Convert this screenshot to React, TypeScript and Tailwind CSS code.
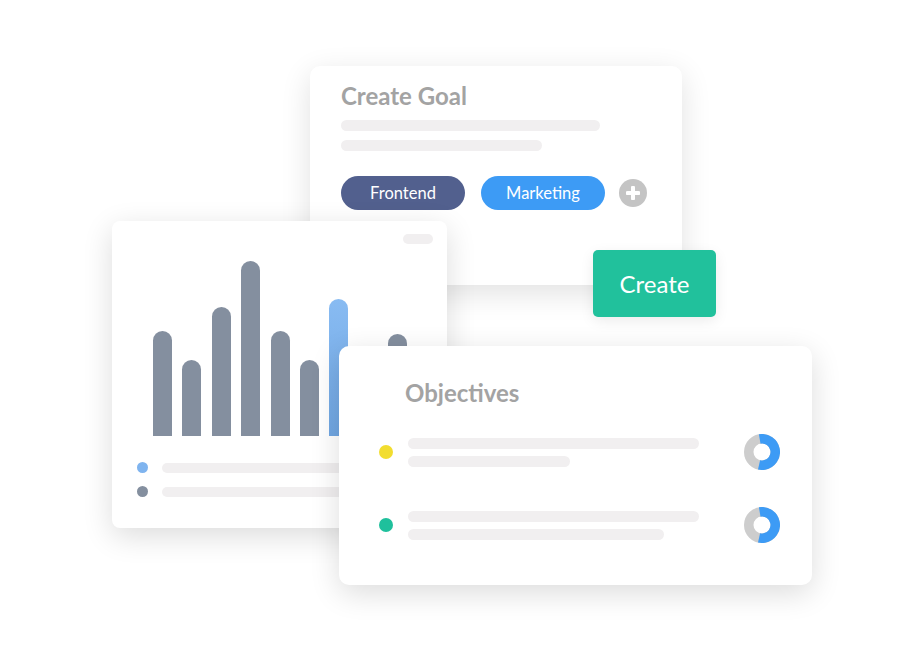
const font = { fontFamily: 'Lato, "Open Sans", sans-serif' }

const bars = [
  { h: 105, blue: false },
  { h: 76, blue: false },
  { h: 129, blue: false },
  { h: 175, blue: false },
  { h: 105, blue: false },
  { h: 76, blue: false },
  { h: 137, blue: true },
  { h: 80, blue: false },
  { h: 102, blue: false },
]

function Donut() {
  const c = 2 * Math.PI * 13.25
  return (
    <svg width="36" height="36" viewBox="0 0 36 36">
      <circle cx="18" cy="18" r="13.25" fill="none" stroke="#cdcdcd" strokeWidth="9.5" />
      <circle
        cx="18"
        cy="18"
        r="13.25"
        fill="none"
        stroke="#3d9bf5"
        strokeWidth="9.5"
        strokeDasharray={`${c * 0.56} ${c}`}
        transform="rotate(-100 18 18)"
      />
    </svg>
  )
}

function Line({ w }: { w: string }) {
  return <div className={`h-[11px] rounded-full bg-[#f1eff0] ${w}`} />
}

export default function App() {
  return (
    <div className="relative w-[921px] h-[659px] bg-white overflow-hidden" style={font}>
      {/* Create Goal card */}
      <div className="absolute left-[310px] top-[66px] w-[372px] h-[219px] rounded-[10px] bg-white shadow-[0_8px_30px_rgba(0,0,0,0.12)] pl-[31px] pt-[18px]">
        <div className="text-[24px] leading-none font-bold text-[#a3a3a3]">Create Goal</div>
        <div className="mt-[12px] flex flex-col gap-[9px]">
          <Line w="w-[259px]" />
          <Line w="w-[201px]" />
        </div>
        <div className="mt-[25px] flex items-center gap-[16px]">
          <div className="w-[124px] h-[34px] rounded-full bg-[#52608e] text-white text-[16.5px] flex items-center justify-center">
            Frontend
          </div>
          <div className="w-[124px] h-[34px] rounded-full bg-[#3d9bf5] text-white text-[16.5px] flex items-center justify-center">
            Marketing
          </div>
          <div className="ml-[-2px] w-[28px] h-[28px] rounded-full bg-[#c4c4c4] flex items-center justify-center">
            <svg width="14" height="14" viewBox="0 0 14 14">
              <path d="M7 1.5v11M1.5 7h11" stroke="white" strokeWidth="4" strokeLinecap="round" />
            </svg>
          </div>
        </div>
      </div>

      {/* Chart card */}
      <div className="absolute left-[112px] top-[221px] w-[335px] h-[307px] rounded-[8px] bg-white shadow-[0_8px_30px_rgba(0,0,0,0.14)] flex flex-col">
        <div className="flex justify-end pt-[13px] pr-[14px]">
          <div className="w-[30px] h-[10px] rounded-full bg-[#f1eff0]" />
        </div>
        <div className="ml-[41px] h-[192px] flex items-end gap-[10.4px]">
          {bars.map((b, i) => (
            <div
              key={i}
              className={`w-[19px] rounded-t-full ${b.blue ? 'bg-gradient-to-b from-[#88bbf2] to-[#70a6e2]' : 'bg-[#848f9f]'}`}
              style={{ height: b.h }}
            />
          ))}
        </div>
        <div className="mt-[26px] ml-[25px] flex flex-col gap-[13px]">
          <div className="flex items-center gap-[14px]">
            <div className="w-[11px] h-[11px] rounded-full bg-[#7fb4ef]" />
            <div className="w-[260px] h-[10px] rounded-full bg-[#f1eff0]" />
          </div>
          <div className="flex items-center gap-[14px]">
            <div className="w-[11px] h-[11px] rounded-full bg-[#848f9f]" />
            <div className="w-[260px] h-[10px] rounded-full bg-[#f1eff0]" />
          </div>
        </div>
      </div>

      {/* Create button */}
      <div className="absolute left-[593px] top-[250px] w-[123px] h-[67px] rounded-[5px] bg-[#21c19c] shadow-[0_4px_14px_rgba(0,0,0,0.08)] text-white text-[24px] flex items-center justify-center">
        Create
      </div>

      {/* Objectives card */}
      <div className="absolute left-[339px] top-[346px] w-[473px] h-[239px] rounded-[10px] bg-white shadow-[0_8px_30px_rgba(0,0,0,0.14)] pt-[35px]">
        <div className="pl-[66px] text-[24px] leading-none font-bold text-[#a3a3a3]">Objectives</div>
        <div className="mt-[29px] flex flex-col gap-[37px]">
          {[['w-[162px]', 'bg-[#f2dd2f]'], ['w-[256px]', 'bg-[#1fc09c]']].map(([w, dot], i) => (
            <div key={i} className="flex items-center pl-[40px]">
              <div className={`w-[14px] h-[14px] rounded-full ${dot}`} />
              <div className="ml-[15px] flex flex-col gap-[7px]">
                <Line w="w-[291px]" />
                <Line w={w} />
              </div>
              <div className="ml-[45px]">
                <Donut />
              </div>
            </div>
          ))}
        </div>
      </div>
    </div>
  )
}
